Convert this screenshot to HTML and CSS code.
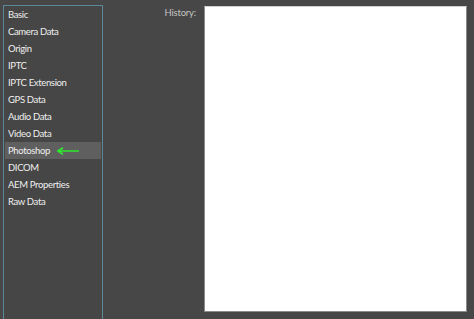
FILE: index.html
```html
<!DOCTYPE html>
<html lang="en">
<head>
  <meta charset="UTF-8">
  <title>File Info</title>
  <link rel="stylesheet" href="styles.css">
</head>
<body>
  <div class="dialog">
    <ul class="sidebar">
      <li>Basic</li>
      <li>Camera Data</li>
      <li>Origin</li>
      <li>IPTC</li>
      <li>IPTC Extension</li>
      <li>GPS Data</li>
      <li>Audio Data</li>
      <li>Video Data</li>
      <li class="active">Photoshop
        <svg class="arrow" width="24" height="8" viewBox="0 0 24 8">
          <path d="M23 4H3M7 0.8L2 4l5 3.2" fill="none" stroke="#2ee82e" stroke-width="1.7"/>
        </svg>
      </li>
      <li>DICOM</li>
      <li>AEM Properties</li>
      <li>Raw Data</li>
    </ul>
    <div class="content">
      <label class="field-label">History:</label>
      <div class="history-box"></div>
    </div>
  </div>
</body>
</html>
```

FILE: styles.css
```css
body {
  margin: 0;
  background: #474747;
  font-family: Lato, "Open Sans", sans-serif;
  height: 319px;
  overflow: hidden;
}

.dialog {
  display: flex;
  padding: 5px 7px 0 3px;
  height: 314px;
}

.sidebar {
  box-sizing: border-box;
  list-style: none;
  margin: 0;
  padding: 0 1px;
  width: 100px;
  border: 1px solid #5b8799;
  border-bottom: none;
  background: #464646;
}

.sidebar li {
  height: 17px;
  line-height: 17px;
  padding-left: 3px;
  font-size: 9.5px;
  letter-spacing: -0.35px;
  color: #efefef;
  display: flex;
  align-items: center;
  white-space: nowrap;
}

.sidebar li.active {
  background: #5f5f5f;
}

.arrow {
  margin-left: 6px;
}

.content {
  flex: 1;
  display: flex;
  padding-top: 1px;
}

.field-label {
  width: 93px;
  text-align: right;
  padding-right: 8px;
  font-size: 9.5px;
  letter-spacing: -0.2px;
  color: #c4c4c4;
  line-height: 14px;
}

.history-box {
  flex: 1;
  height: 304px;
  background: #ffffff;
  border: 1px solid #8a8a8a;
  border-top-color: #d0d0d0;
}
```
